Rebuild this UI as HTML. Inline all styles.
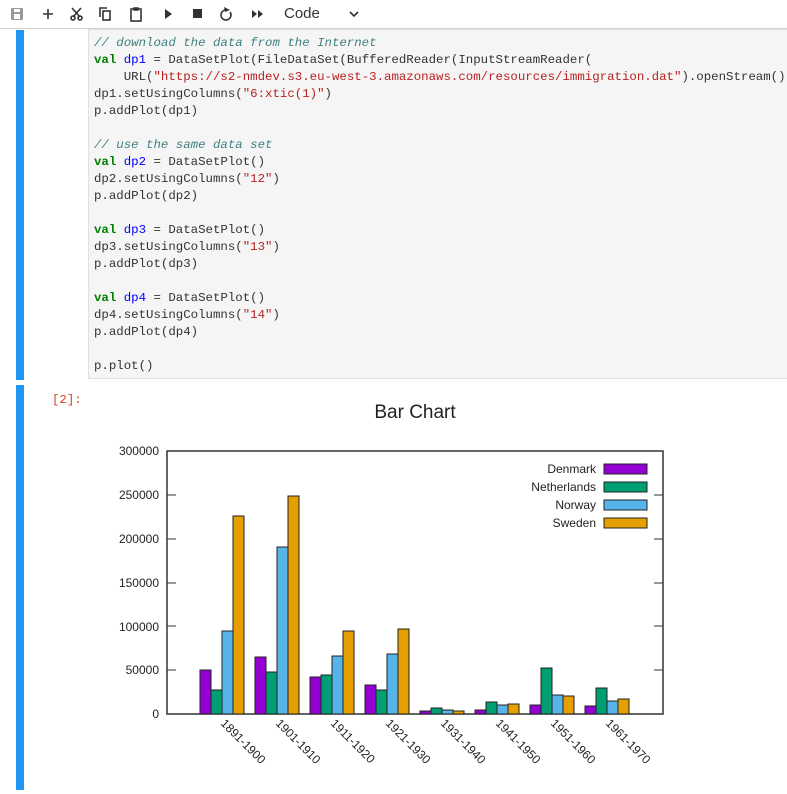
<!DOCTYPE html>
<html><head><meta charset="utf-8"><style>
body{margin:0;width:787px;height:794px;background:#fff;overflow:hidden;position:relative;font-family:"Liberation Sans",sans-serif}
.tb{position:absolute;left:0;top:0;width:787px;height:28px;border-bottom:1px solid #cfcfcf;background:#fff}
.tb span{position:absolute;top:5px;font-size:15px;color:#333}
.bar{position:absolute;left:16px;width:8px;background:#2196f3}
.code{position:absolute;left:88px;top:29px;width:699px;height:350px;background:#f5f5f5;border:1px solid #e0e0e0;border-right:none;box-sizing:border-box}
pre{margin:0;position:absolute;left:5px;top:5px;font-family:"Liberation Mono",monospace;font-size:12.4px;line-height:17px;color:#333}
.c{color:#408080;font-style:italic}.k{color:#008000;font-weight:bold}.v{color:#0000ff}.s{color:#ba2121}
</style></head><body>
<div class="tb">
<svg width="787" height="28" style="position:absolute;left:0;top:0">
<g fill="#999"><rect x="11" y="8" width="12" height="12" rx="1"/></g><rect x="14" y="9" width="6" height="3" fill="#fff"/><rect x="14" y="14" width="6" height="5" fill="#fff"/>
<g stroke="#333" stroke-width="1.6" fill="none">
<path d="M48 9v10M43 14h10"/>
<circle cx="73" cy="18" r="2"/><circle cx="80" cy="18" r="2"/><path d="M72 8l8 9M81 8l-8 9"/>
<rect x="103" y="11" width="7" height="9"/><path d="M100 17V8h7"/>
<rect x="131" y="9" width="10" height="12"/><path d="M134 8h4v2h-4z"/>
<path d="M226 10a5 5 0 1 0 4 2"/>
<path d="M350 12l4 4 4-4"/>
</g>
<g fill="#333"><path d="M165 9l7 5-7 5z"/><rect x="193" y="9" width="9" height="9"/><path d="M224 7l6 3-5 2z"/><path d="M252 10l5 4-5 4zM258 10l5 4-5 4z"/></g>
</svg>
<span style="left:284px">Code</span>
</div>
<div class="bar" style="top:30px;height:350px"></div>
<div class="bar" style="top:385px;height:405px"></div>
<div class="code"><pre><span class="c">// download the data from the Internet</span>
<span class="k">val</span> <span class="v">dp1</span> = DataSetPlot(FileDataSet(BufferedReader(InputStreamReader(
    URL(<span class="s">"https://s2-nmdev.s3.eu-west-3.amazonaws.com/resources/immigration.dat"</span>).openStream())))))
dp1.setUsingColumns(<span class="s">"6:xtic(1)"</span>)
p.addPlot(dp1)

<span class="c">// use the same data set</span>
<span class="k">val</span> <span class="v">dp2</span> = DataSetPlot()
dp2.setUsingColumns(<span class="s">"12"</span>)
p.addPlot(dp2)

<span class="k">val</span> <span class="v">dp3</span> = DataSetPlot()
dp3.setUsingColumns(<span class="s">"13"</span>)
p.addPlot(dp3)

<span class="k">val</span> <span class="v">dp4</span> = DataSetPlot()
dp4.setUsingColumns(<span class="s">"14"</span>)
p.addPlot(dp4)

p.plot()</pre></div>
<div style="position:absolute;left:52px;top:393px;font-family:'Liberation Mono',monospace;font-size:12.4px;color:#d84315">[2]:</div>
<svg width="787" height="794" style="position:absolute;left:0;top:0" font-family="Liberation Sans, sans-serif">
<text x="415" y="418" font-size="19" text-anchor="middle" fill="#222">Bar Chart</text>
<g font-size="12" fill="#222" text-anchor="end">
<text x="159" y="455">300000</text><text x="159" y="499">250000</text><text x="159" y="543">200000</text><text x="159" y="587">150000</text><text x="159" y="631">100000</text><text x="159" y="674">50000</text><text x="159" y="718">0</text>
</g>
<g stroke="#333" stroke-width="1">
<path d="M167 495h9M167 539h9M167 583h9M167 626h9M167 670h9M663 495h-9M663 539h-9M663 583h-9M663 626h-9M663 670h-9"/>
</g>
<rect x="167" y="451" width="496" height="263" fill="none" stroke="#333" stroke-width="1.5"/>
<g stroke="#222" stroke-width="1">
<g fill="#9400d3"><rect x="200" y="670" width="11" height="44"/><rect x="255" y="657" width="11" height="57"/><rect x="310" y="677" width="11" height="37"/><rect x="365" y="685" width="11" height="29"/><rect x="420" y="711" width="11" height="3"/><rect x="475" y="710" width="11" height="4"/><rect x="530" y="705" width="11" height="9"/><rect x="585" y="706" width="11" height="8"/>
<rect x="604" y="464" width="43" height="10"/></g>
<g fill="#009e73"><rect x="211" y="690" width="11" height="24"/><rect x="266" y="672" width="11" height="42"/><rect x="321" y="675" width="11" height="39"/><rect x="376" y="690" width="11" height="24"/><rect x="431" y="708" width="11" height="6"/><rect x="486" y="702" width="11" height="12"/><rect x="541" y="668" width="11" height="46"/><rect x="596" y="688" width="11" height="26"/>
<rect x="604" y="482" width="43" height="10"/></g>
<g fill="#56b4e9"><rect x="222" y="631" width="11" height="83"/><rect x="277" y="547" width="11" height="167"/><rect x="332" y="656" width="11" height="58"/><rect x="387" y="654" width="11" height="60"/><rect x="442" y="710" width="11" height="4"/><rect x="497" y="705" width="11" height="9"/><rect x="552" y="695" width="11" height="19"/><rect x="607" y="701" width="11" height="13"/>
<rect x="604" y="500" width="43" height="10"/></g>
<g fill="#e69f00"><rect x="233" y="516" width="11" height="198"/><rect x="288" y="496" width="11" height="218"/><rect x="343" y="631" width="11" height="83"/><rect x="398" y="629" width="11" height="85"/><rect x="453" y="711" width="11" height="3"/><rect x="508" y="704" width="11" height="10"/><rect x="563" y="696" width="11" height="18"/><rect x="618" y="699" width="11" height="15"/>
<rect x="604" y="518" width="43" height="10"/></g>
</g>
<g font-size="12" fill="#222" text-anchor="end">
<text x="596" y="473">Denmark</text><text x="596" y="491">Netherlands</text><text x="596" y="509">Norway</text><text x="596" y="527">Sweden</text>
</g>
<g font-size="12" fill="#222">
<text transform="translate(220,724) rotate(45)">1891-1900</text>
<text transform="translate(275,724) rotate(45)">1901-1910</text>
<text transform="translate(330,724) rotate(45)">1911-1920</text>
<text transform="translate(385,724) rotate(45)">1921-1930</text>
<text transform="translate(440,724) rotate(45)">1931-1940</text>
<text transform="translate(495,724) rotate(45)">1941-1950</text>
<text transform="translate(550,724) rotate(45)">1951-1960</text>
<text transform="translate(605,724) rotate(45)">1961-1970</text>
</g>
</svg>
</body></html>
